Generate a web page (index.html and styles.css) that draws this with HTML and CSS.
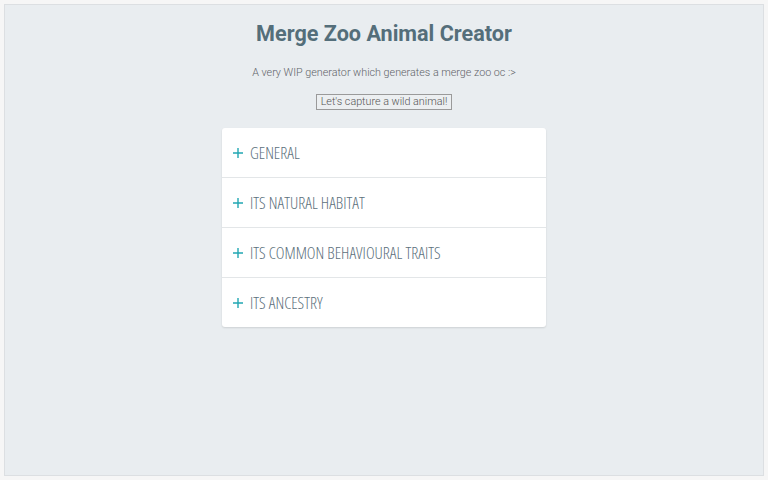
FILE: index.html
```html
<!DOCTYPE html>
<html>
<head>
<meta charset="utf-8">
<link rel="stylesheet" href="styles.css">
</head>
<body>
<div class="panel">
  <h1 class="title">Merge Zoo Animal Creator</h1>
  <p class="subtitle">A very WIP generator which generates a merge zoo oc :&gt;</p>
  <button class="capture">Let's capture a wild animal!</button>
  <div class="accordion">
    <div class="item"><svg class="plus" viewBox="0 0 10 10" width="10" height="10"><path d="M5 0V10M0 5H10" stroke="#22a7b3" stroke-width="1.4"/></svg><span class="label">General</span></div>
    <div class="item"><svg class="plus" viewBox="0 0 10 10" width="10" height="10"><path d="M5 0V10M0 5H10" stroke="#22a7b3" stroke-width="1.4"/></svg><span class="label">Its natural habitat</span></div>
    <div class="item"><svg class="plus" viewBox="0 0 10 10" width="10" height="10"><path d="M5 0V10M0 5H10" stroke="#22a7b3" stroke-width="1.4"/></svg><span class="label">Its common behavioural traits</span></div>
    <div class="item"><svg class="plus" viewBox="0 0 10 10" width="10" height="10"><path d="M5 0V10M0 5H10" stroke="#22a7b3" stroke-width="1.4"/></svg><span class="label">Its ancestry</span></div>
  </div>
</div>
</body>
</html>
```
FILE: styles.css
```css
html, body { margin: 0; padding: 0; }
body {
  background: #f6f6f6;
  padding: 4px;
  height: 480px;
  box-sizing: border-box;
  font-family: Roboto, "Liberation Sans", sans-serif;
}
.panel {
  height: 472px;
  box-sizing: border-box;
  background: #e9edf0;
  border: 1px solid #dcdfe2;
  display: flex;
  flex-direction: column;
  align-items: center;
}
.title {
  margin: 16px 0 0;
  font-size: 21.6px;
  font-weight: 700;
  color: #546e7a;
  line-height: 26px;
}
.subtitle {
  margin: 19px 0 0;
  font-size: 10.75px;
  font-weight: 300;
  color: #5f6368;
  line-height: 14px;
}
.capture {
  margin-top: 14px;
  font-family: Roboto, sans-serif;
  font-weight: 300;
  font-size: 10.75px;
  color: #555;
  background: #eceff1;
  border: 1px solid #9a9a9a;
  padding: 1px 4px 2px;
  line-height: 11px;
}
.accordion {
  margin-top: 18px;
  width: 324px;
  background: #fff;
  border-radius: 3px;
  box-shadow: 0 1px 2px rgba(0,0,0,0.12);
}
.item {
  height: 49px;
  display: flex;
  align-items: center;
  padding-left: 11px;
  border-top: 1px solid #e3e6e8;
}
.item:first-child { border-top: none; height: 49px; }
.plus {
  margin-right: 7px;
  flex: none;
}
.label {
  font-family: "Open Sans", sans-serif;
  font-stretch: 75%;
  font-weight: 300;
  font-size: 16.5px;
  text-transform: uppercase;
  color: #5d717c;
}
```
